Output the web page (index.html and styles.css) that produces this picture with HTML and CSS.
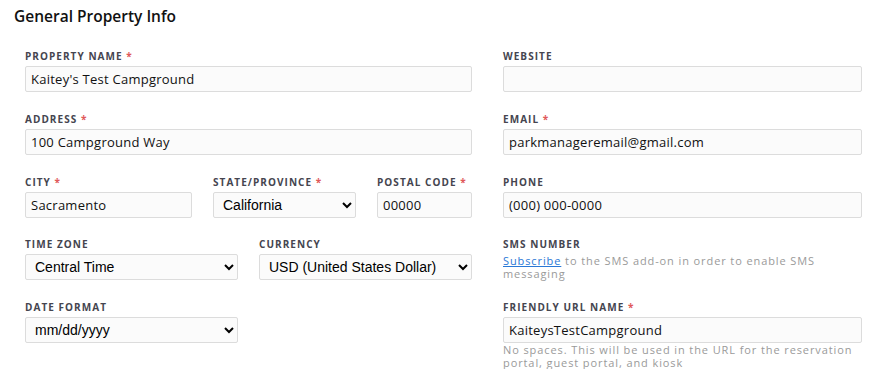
FILE: index.html
```html
<!DOCTYPE html>
<html lang="en">
  <head>
    <meta charset="UTF-8" />
    <meta name="viewport" content="width=device-width, initial-scale=1.0" />
    <title>General Property Info</title>
    <link rel="stylesheet" href="styles.css">
  </head>
  <body>
    <h2 class="title">General Property Info</h2>
    <div class="form">
      <div class="col">
        <div class="field">
          <label>Property Name <span class="req">*</span></label>
          <input type="text" value="Kaitey's Test Campground" />
        </div>
        <div class="field">
          <label>Address <span class="req">*</span></label>
          <input type="text" value="100 Campground Way" />
        </div>
        <div class="row row-3">
          <div class="field short">
            <label>City <span class="req">*</span></label>
            <input type="text" value="Sacramento" />
          </div>
          <div class="field short">
            <label>State/Province <span class="req">*</span></label>
            <select><option>California</option></select>
          </div>
          <div class="field short">
            <label>Postal Code <span class="req">*</span></label>
            <input type="text" value="00000" />
          </div>
        </div>
        <div class="row row-2">
          <div class="field">
            <label>Time Zone</label>
            <select><option>Central Time</option></select>
          </div>
          <div class="field">
            <label>Currency</label>
            <select><option>USD (United States Dollar)</option></select>
          </div>
        </div>
        <div class="row row-2">
          <div class="field">
            <label>Date Format</label>
            <select><option>mm/dd/yyyy</option></select>
          </div>
        </div>
      </div>
      <div class="col">
        <div class="field">
          <label>Website</label>
          <input type="text" value="" />
        </div>
        <div class="field">
          <label>Email <span class="req">*</span></label>
          <input type="text" value="parkmanageremail@gmail.com" />
        </div>
        <div class="field short">
          <label>Phone</label>
          <input type="text" value="(000) 000-0000" />
        </div>
        <div class="field">
          <label>SMS Number</label>
          <p class="help"><a href="#">Subscribe</a> <span>to the SMS add-on in order to enable SMS</span> <span>messaging</span></p>
        </div>
        <div class="field last">
          <label>Friendly URL Name <span class="req">*</span></label>
          <input type="text" value="KaiteysTestCampground" />
          <p class="help">No spaces. This will be used in the URL for the reservation portal, guest portal, and kiosk</p>
        </div>
      </div>
    </div>
  </body>
</html>
```

FILE: styles.css
```css
* {
  margin: 0;
  padding: 0;
  box-sizing: border-box;
}
body {
  font-family: "Open Sans", "Liberation Sans", sans-serif;
  color: #222;
  background: #fff;
}
.title {
  font-size: 15.5px;
  font-weight: 600;
  line-height: 20px;
  padding: 6px 0 0 14px;
  color: #111;
}
.form {
  display: grid;
  grid-template-columns: 447px 359px;
  column-gap: 31px;
  padding: 24px 0 0 25px;
}
.row {
  display: grid;
  column-gap: 21px;
}
.row-3 {
  grid-template-columns: 167px 143px 1fr;
}
.row-2 {
  grid-template-columns: 1fr 1fr;
}
.field {
  height: 63px;
}
.field.short {
  height: 62px;
}
.field.last {
  height: auto;
}
.field label {
  display: block;
  font-size: 10px;
  line-height: 12px;
  font-weight: 700;
  letter-spacing: 1.05px;
  text-transform: uppercase;
  color: #45454f;
  margin-bottom: 4px;
}
.req {
  color: #e0595a;
}
input,
select {
  display: block;
  width: 100%;
  height: 26px;
  border: 1px solid #dcdcdc;
  border-radius: 2px;
  background-color: #fbfbfb;
}
input {
  font-family: "Open Sans", "Liberation Sans", sans-serif;
  font-size: 13px;
  letter-spacing: 0.25px;
  color: #111;
  padding: 0 5px;
  outline: none;
}
select {
  font-family: "Liberation Sans", Arial, sans-serif;
  font-size: 14px;
  color: #000;
  padding: 0 4px 0 5px;
}
.help {
  font-size: 11px;
  line-height: 13px;
  letter-spacing: 0.9px;
  color: #9a9a9a;
}
.help a {
  color: #2a78d6;
}
```
